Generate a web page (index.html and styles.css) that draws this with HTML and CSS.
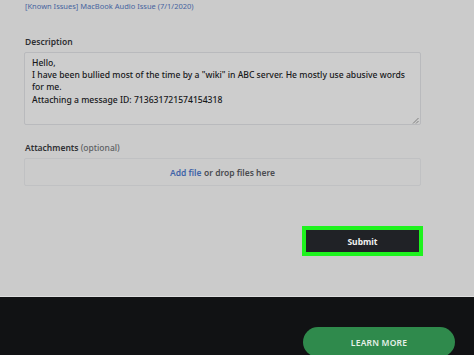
FILE: index.html
```html
<!DOCTYPE html>
<html>
<head>
<meta charset="utf-8">
<link rel="stylesheet" href="styles.css">
</head>
<body>
<div class="page">
  <main class="form">
    <a class="known" href="#">[Known Issues] MacBook Audio Issue (7/1/2020)</a>
    <div class="field desc">
      <div class="label">Description</div>
      <div class="textarea">Hello,<br>I have been bullied most of the time by a "wiki" in ABC server. He mostly use abusive words for me.<br>Attaching a message ID: 713631721574154318<span class="grip"><svg width="7" height="7" viewBox="0 0 7 7"><path d="M6.5 1L1 6.5M6.5 4L4 6.5" stroke="#777" stroke-width="0.9"/></svg></span></div>
    </div>
    <div class="field attach">
      <div class="label">Attachments <span class="opt">(optional)</span></div>
      <div class="drop"><a href="#" class="add">Add file</a> or drop files here</div>
    </div>
    <div class="actions">
      <div class="highlight"><button class="submit">Submit</button></div>
    </div>
  </main>
  <footer class="footer">
    <button class="learn">LEARN MORE</button>
  </footer>
</div>
</body>
</html>
```

FILE: styles.css
```css
html, body { margin: 0; padding: 0; }
body {
  width: 474px;
  height: 355px;
  overflow: hidden;
  background: #cbcbcb;
  font-family: "Noto Sans", "Open Sans", sans-serif;
}
.page { display: flex; flex-direction: column; height: 355px; }
.form {
  padding: 1px 53px 0 24px;
  height: 297px;
  flex: none;
  box-sizing: border-box;
  border-bottom: 1px solid #dedede;
  display: flex;
  flex-direction: column;
}
.known {
  font-size: 7.5px;
  color: #46649f;
  text-decoration: none;
  line-height: 11px;
  padding-left: 1px;
}
.field { display: flex; flex-direction: column; }
.desc { margin-top: 24px; }
.label {
  font-size: 8.5px;
  font-weight: 600;
  color: #2f3033;
  line-height: 12px;
  padding-left: 1px;
  margin-bottom: 4px;
}
.opt { font-weight: 500; color: #5d5f63; }
.textarea {
  position: relative;
  height: 63px;
  border: 1px solid #b9babd;
  border-radius: 2px;
  background: #cdcdcd;
  padding: 4px 7px 4px 7px;
  font-size: 8.6px;
  font-weight: 500;
  line-height: 12.2px;
  color: #17181a;
}
.grip { position: absolute; right: 1px; bottom: 0px; line-height: 0; }
.attach { margin-top: 17px; }
.attach .label { margin-bottom: 4px; }
.drop {
  height: 26px;
  border: 1px solid #c0c1c3;
  border-radius: 2px;
  display: flex;
  align-items: center;
  justify-content: center;
  font-size: 8.5px;
  font-weight: 600;
  color: #4a4c50;
}
.add { color: #3f64a8; text-decoration: none; margin-right: 2.5px; }
.actions { display: flex; justify-content: flex-end; margin-top: 40px; margin-right: -2px; }
.highlight {
  border: 4px solid #1ef31e;
  display: flex;
}
.submit {
  width: 113px;
  height: 22px;
  border: 0;
  background: #202226;
  color: #f2f2f2;
  font-family: "Noto Sans", sans-serif;
  font-size: 8.5px;
  font-weight: 700;
  padding: 0;
}
.footer {
  flex: 1;
  background: #111214;
  display: flex;
  justify-content: flex-end;
  align-items: flex-start;
  padding: 30px 19px 0 0;
}
.learn {
  width: 152px;
  height: 30px;
  border: 0;
  border-radius: 15px;
  background: #2f8a4c;
  color: #e6f0e8;
  font-family: "Noto Sans", sans-serif;
  font-size: 8.5px;
  font-weight: 600;
  letter-spacing: 0.2px;
  padding: 0;
}
```
